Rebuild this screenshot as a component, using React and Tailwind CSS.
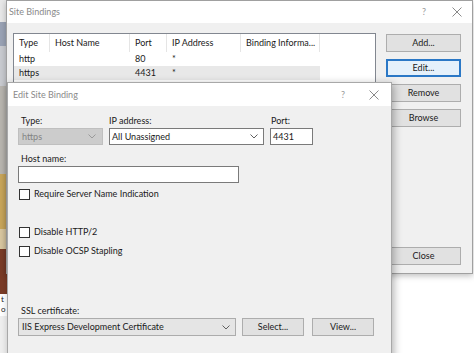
import React from 'react';

const Chevron = ({ color = '#606060' }) => (
  <svg width="8" height="5" viewBox="0 0 8 5" fill="none">
    <polyline points="0.5,0.5 4,4 7.5,0.5" stroke={color} strokeWidth="1" />
  </svg>
);

const CloseX = () => (
  <svg width="10" height="10" viewBox="0 0 10 10" fill="none">
    <line x1="0.5" y1="0.5" x2="9.5" y2="9.5" stroke="#8a8a8a" strokeWidth="1" />
    <line x1="9.5" y1="0.5" x2="0.5" y2="9.5" stroke="#8a8a8a" strokeWidth="1" />
  </svg>
);

const Button = ({ children, focused, className = '' }) => (
  <div
    className={`flex items-center justify-center text-[#1a1a1a] ${
      focused
        ? 'bg-[#e5f1fb] border-2 border-[#2b78c6]'
        : 'bg-[#e1e1e1] border border-[#adadad]'
    } ${className}`}
  >
    {children}
  </div>
);

const Checkbox = ({ label, className = '' }) => (
  <div className={`flex items-center gap-[4px] h-[12px] ${className}`}>
    <div className="w-[11px] h-[11px] bg-white border border-[#333]" />
    <span className="leading-[12px]">{label}</span>
  </div>
);

const columns = [
  { label: 'Type', w: 'w-[36px]' },
  { label: 'Host Name', w: 'w-[80px]' },
  { label: 'Port', w: 'w-[37px]' },
  { label: 'IP Address', w: 'w-[74px]' },
  { label: 'Binding Informa...', w: 'w-[79px]' },
];

const rows = [
  { cells: ['http', '', '80', '*', ''], selected: false },
  { cells: ['https', '', '4431', '*', ''], selected: true },
];

const App = () => {
  return (
    <div className="relative w-[474px] h-[353px] overflow-hidden bg-white font-['Lato',sans-serif] text-[9px] text-[#1a1a1a]">
      {/* ──── Desktop peeking on the left ──── */}
      <div className="absolute left-0 top-0 w-[7px] h-full flex flex-col">
        <div className="h-[22px] bg-[#e8e8e8]" />
        <div className="h-[24px] bg-[#9aa3b5]" />
        <div className="h-[40px] bg-[#c9cbd0]" />
        <div className="h-[88px] bg-[#b9b6b0]" />
        <div className="h-[55px] bg-[#c9a65a]" />
        <div className="h-[20px] bg-[#d9c7a0]" />
        <div className="h-[45px] bg-[#7a3b26]" />
        <div className="h-[22px] bg-white text-[8px] leading-[10px] text-[#222] pl-[1px]">
          <div>t</div>
          <div>o</div>
        </div>
        <div className="flex-1 bg-[#efefef]" />
      </div>

      {/* ──── Site Bindings window ──── */}
      <div className="absolute left-[6px] top-0 w-[467px] h-[274px] flex flex-col border border-[#a0a0a0] shadow-[0_2px_6px_rgba(0,0,0,0.25)]">
        <div className="h-[22px] bg-white flex items-center pl-[2px] pr-[10px] text-[#8a8a8a]">
          <span>Site Bindings</span>
          <span className="ml-auto mr-[26px] text-[#9a9a9a]">?</span>
          <CloseX />
        </div>
        <div className="flex-1 bg-[#f0f0f0] flex gap-[10px] pt-[10px] pl-[6px] pr-[10px] pb-[8px]">
          <div className="w-[363px] h-[120px] bg-white border border-[#828790] flex flex-col">
            <div className="flex h-[18px]">
              {columns.map((c) => (
                <div
                  key={c.label}
                  className={`${c.w} flex items-center pl-[5px] border-r border-[#e5e5e5] whitespace-nowrap overflow-hidden`}
                >
                  {c.label}
                </div>
              ))}
            </div>
            {rows.map((r, i) => (
              <div key={i} className={`flex h-[14px] w-[306px] ${r.selected ? 'bg-[#e8e8e8]' : ''}`}>
                {r.cells.map((cell, j) => (
                  <div key={j} className={`${columns[j].w} flex items-center pl-[5px]`}>
                    {cell}
                  </div>
                ))}
              </div>
            ))}
          </div>
          <div className="w-[75px] flex flex-col gap-[7px] pt-[1px]">
            <Button className="h-[18px]">Add...</Button>
            <Button className="h-[18px]" focused>
              Edit...
            </Button>
            <Button className="h-[18px]">Remove</Button>
            <Button className="h-[18px]">Browse</Button>
            <Button className="h-[18px] mt-auto">Close</Button>
          </div>
        </div>
      </div>

      {/* ──── Edit Site Binding dialog ──── */}
      <div className="absolute left-[7px] top-[82px] w-[385px] h-[300px] flex flex-col border border-[#a8a8a8] shadow-[2px_2px_8px_rgba(0,0,0,0.3)]">
        <div className="h-[23px] bg-white flex items-center pl-[5px] pr-[12px] text-[#8a8a8a]">
          <span>Edit Site Binding</span>
          <span className="ml-auto mr-[24px] text-[#9a9a9a]">?</span>
          <CloseX />
        </div>
        <div className="flex-1 bg-[#f0f0f0] px-[10px] pt-[9px] flex flex-col">
          {/* Type / IP / Port */}
          <div className="flex gap-[6px]">
            <div className="w-[85px] flex flex-col gap-[1px]">
              <span className="leading-[12px] ml-[3px]">Type:</span>
              <div className="h-[17px] bg-[#cccccc] border border-[#bfbfbf] flex items-center pl-[3px] pr-[6px] text-[#838383]">
                <span>https</span>
                <span className="ml-auto">
                  <Chevron color="#9a9a9a" />
                </span>
              </div>
            </div>
            <div className="w-[155px] flex flex-col gap-[1px]">
              <span className="leading-[12px]">IP address:</span>
              <div className="h-[17px] bg-white border border-[#7a7a7a] flex items-center pl-[2px] pr-[5px]">
                <span>All Unassigned</span>
                <span className="ml-auto">
                  <Chevron />
                </span>
              </div>
            </div>
            <div className="w-[43px] flex flex-col gap-[1px]">
              <span className="leading-[12px] ml-[1px]">Port:</span>
              <div className="h-[17px] bg-white border border-[#7a7a7a] flex items-center pl-[2px]">4431</div>
            </div>
          </div>

          {/* Host name */}
          <div className="flex flex-col gap-[1px] mt-[8px]">
            <span className="leading-[12px] ml-[3px]">Host name:</span>
            <div className="w-[221px] h-[17px] bg-white border border-[#7a7a7a]" />
          </div>

          <Checkbox label="Require Server Name Indication" className="mt-[5px] ml-[1px]" />
          <Checkbox label="Disable HTTP/2" className="mt-[26px] ml-[1px]" />
          <Checkbox label="Disable OCSP Stapling" className="mt-[7px] ml-[1px]" />

          {/* SSL certificate */}
          <div className="flex flex-col gap-[1px] mt-[48px]">
            <span className="leading-[12px] ml-[3px]">SSL certificate:</span>
            <div className="flex items-center">
              <div className="w-[218px] h-[18px] bg-[#e5e5e5] border border-[#acacac] flex items-center pl-[3px] pr-[5px]">
                <span>IIS Express Development Certificate</span>
                <span className="ml-auto">
                  <Chevron />
                </span>
              </div>
              <Button className="w-[62px] h-[18px] ml-[6px]">Select...</Button>
              <Button className="w-[62px] h-[18px] ml-[8px]">View...</Button>
            </div>
          </div>
        </div>
      </div>
    </div>
  );
};

export default App;
